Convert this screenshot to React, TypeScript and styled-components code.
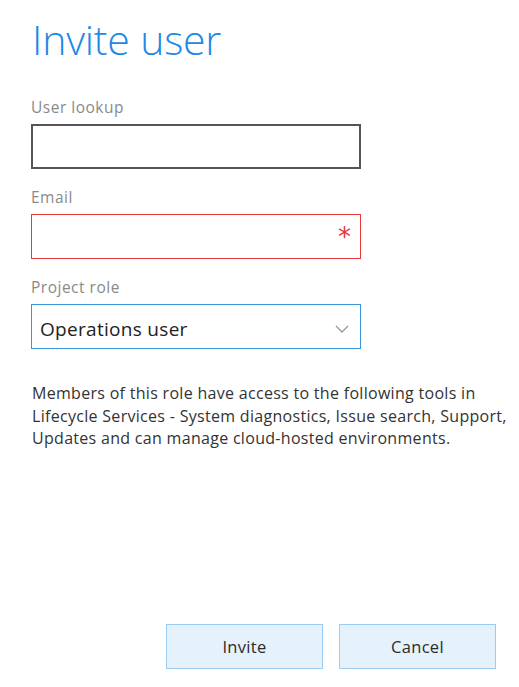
import styled, { createGlobalStyle } from "styled-components";

const GlobalStyle = createGlobalStyle`
  html, body {
    margin: 0;
    padding: 0;
    background: #ffffff;
  }
  body {
    font-family: "Open Sans", "Noto Sans", "Liberation Sans", sans-serif;
  }
`;

const Panel = styled.div`
  width: 519px;
  height: 687px;
  box-sizing: border-box;
  padding: 12px 0 0 31px;
  display: flex;
  flex-direction: column;
`;

const Title = styled.h1`
  margin: 0 0 0 1px;
  font-weight: 300;
  font-size: 41px;
  line-height: 54px;
  color: #1e88e5;
  letter-spacing: -0.2px;
`;

const Form = styled.div`
  margin-top: 31px;
  display: flex;
  flex-direction: column;
  gap: 18px;
`;

const Field = styled.div`
  display: flex;
  flex-direction: column;
  gap: 7px;
`;

const Label = styled.label`
  font-size: 15.5px;
  line-height: 20px;
  letter-spacing: 0.5px;
  color: #8a8a8a;
`;

const Box = styled.div<{ $tone: "plain" | "error" | "focus" }>`
  position: relative;
  width: 330px;
  height: 45px;
  box-sizing: border-box;
  border-style: solid;
  border-color: ${(p) =>
    p.$tone === "error" ? "#e8383d" : p.$tone === "focus" ? "#3a96dd" : "#555555"};
  border-width: ${(p) => (p.$tone === "plain" ? "2px" : "1.5px")};
  background: #fff;
  display: flex;
  align-items: center;
  padding: 0 8px;
`;

const Value = styled.span`
  flex: 1;
  font-size: 19px;
  letter-spacing: 0.3px;
  color: #222;
  padding-top: 4px;
`;

const Asterisk = styled.span`
  position: absolute;
  right: 9px;
  top: 9px;
  color: #e8383d;
  font-size: 26px;
  line-height: 26px;
  font-family: "DejaVu Sans", sans-serif;
`;

const Chevron = styled.svg`
  width: 14px;
  height: 8px;
  margin-right: 3px;
  margin-top: 5px;
`;

const Description = styled.p`
  margin: 33px 0 0 1px;
  width: 488px;
  font-size: 16px;
  line-height: 22.5px;
  letter-spacing: 0.3px;
  color: #333;
`;

const Actions = styled.div`
  margin-top: auto;
  margin-bottom: 18px;
  padding-left: 135px;
  display: flex;
  gap: 16px;
`;

const Button = styled.button`
  width: 157px;
  height: 45px;
  box-sizing: border-box;
  background: #e5f1fb;
  border: 1.5px solid #9cccf2;
  font-family: inherit;
  font-size: 16.5px;
  letter-spacing: 0.3px;
  color: #2b2b2b;
  padding: 0;
  cursor: pointer;
`;

export default function App() {
  return (
    <>
      <GlobalStyle />
      <Panel>
        <Title>Invite user</Title>
        <Form>
          <Field>
            <Label>User lookup</Label>
            <Box $tone="plain" />
          </Field>
          <Field>
            <Label>Email</Label>
            <Box $tone="error">
              <Asterisk>*</Asterisk>
            </Box>
          </Field>
          <Field>
            <Label>Project role</Label>
            <Box $tone="focus">
              <Value>Operations user</Value>
              <Chevron viewBox="0 0 14 8">
                <path d="M1 1 L7 7 L13 1" fill="none" stroke="#999" strokeWidth="1.3" />
              </Chevron>
            </Box>
          </Field>
        </Form>
        <Description>
          Members of this role have access to the following tools in Lifecycle Services - System
          diagnostics, Issue search, Support, Updates and can manage cloud-hosted environments.
        </Description>
        <Actions>
          <Button>Invite</Button>
          <Button>Cancel</Button>
        </Actions>
      </Panel>
    </>
  );
}
